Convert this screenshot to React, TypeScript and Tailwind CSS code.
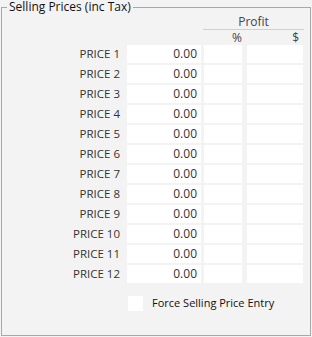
const ROWS = Array.from({ length: 12 }, (_, i) => `PRICE ${i + 1}`);

export default function App() {
  return (
    <div className="w-[312px] h-[337px] bg-[#f3f3f3] pt-[1px] pl-[1px] font-['Open_Sans',sans-serif] text-[12px]">
      <fieldset className="w-[310px] h-[335px] border border-[#a8a8a8]">
        <legend className="ml-[5px] px-[2px] leading-[12px] text-[#111]">Selling Prices (inc Tax)</legend>

        <div className="mt-[2px] ml-[201px] w-[101px] border-b border-[#d0d0d0] text-center leading-[14px] text-[#444]">
          Profit
        </div>
        <div className="flex leading-[15px] text-[#444]">
          <div className="ml-[202px] w-[38px] text-right">%</div>
          <div className="ml-[5px] w-[56px] text-right pr-[4px]">$</div>
        </div>

        <div className="flex flex-col gap-[2px]">
          {ROWS.map((label) => (
            <div key={label} className="flex items-center h-[18px]">
              <div className="w-[118px] text-right text-[11.5px] text-[#333]">{label}</div>
              <div className="ml-[7px] w-[74px] h-[18px] bg-white text-right pr-[4px] leading-[18px] text-[#333]">
                0.00
              </div>
              <div className="ml-[3px] w-[38px] h-[18px] bg-white" />
              <div className="ml-[5px] w-[56px] h-[18px] bg-white" />
            </div>
          ))}
        </div>

        <div className="flex items-center mt-[12px] ml-[126px]">
          <div className="w-[15px] h-[15px] bg-white" />
          <span className="ml-[9px] text-[11px] text-[#111]">Force Selling Price Entry</span>
        </div>
      </fieldset>
    </div>
  );
}
